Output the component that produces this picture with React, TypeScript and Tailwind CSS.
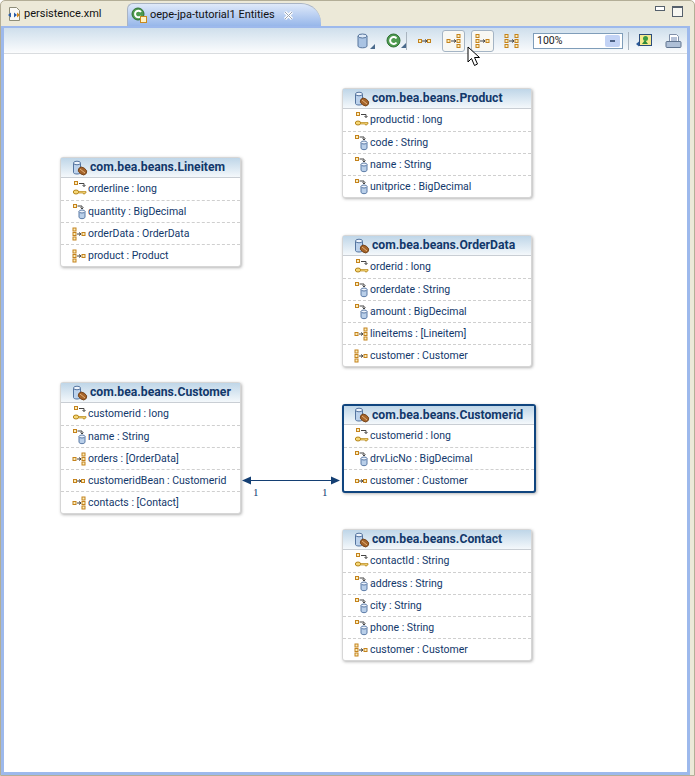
type IconKind = "key" | "col" | "o2o" | "o2m" | "m2o";

type Row = { icon: IconKind; text: string };

type Entity = {
  title: string;
  x: number;
  y: number;
  w: number;
  selected?: boolean;
  rows: Row[];
};

const entities: Entity[] = [
  {
    title: "com.bea.beans.Product",
    x: 342,
    y: 88,
    w: 190,
    rows: [
      { icon: "key", text: "productid : long" },
      { icon: "col", text: "code : String" },
      { icon: "col", text: "name : String" },
      { icon: "col", text: "unitprice : BigDecimal" },
    ],
  },
  {
    title: "com.bea.beans.Lineitem",
    x: 60,
    y: 157,
    w: 181,
    rows: [
      { icon: "key", text: "orderline : long" },
      { icon: "col", text: "quantity : BigDecimal" },
      { icon: "m2o", text: "orderData : OrderData" },
      { icon: "m2o", text: "product : Product" },
    ],
  },
  {
    title: "com.bea.beans.OrderData",
    x: 342,
    y: 235,
    w: 190,
    rows: [
      { icon: "key", text: "orderid : long" },
      { icon: "col", text: "orderdate : String" },
      { icon: "col", text: "amount : BigDecimal" },
      { icon: "o2m", text: "lineitems : [Lineitem]" },
      { icon: "m2o", text: "customer : Customer" },
    ],
  },
  {
    title: "com.bea.beans.Customer",
    x: 60,
    y: 382,
    w: 181,
    rows: [
      { icon: "key", text: "customerid : long" },
      { icon: "col", text: "name : String" },
      { icon: "o2m", text: "orders : [OrderData]" },
      { icon: "o2o", text: "customeridBean : Customerid" },
      { icon: "o2m", text: "contacts : [Contact]" },
    ],
  },
  {
    title: "com.bea.beans.Customerid",
    x: 342,
    y: 404,
    w: 194,
    selected: true,
    rows: [
      { icon: "key", text: "customerid : long" },
      { icon: "col", text: "drvLicNo : BigDecimal" },
      { icon: "o2o", text: "customer : Customer" },
    ],
  },
  {
    title: "com.bea.beans.Contact",
    x: 342,
    y: 529,
    w: 190,
    rows: [
      { icon: "key", text: "contactId : String" },
      { icon: "col", text: "address : String" },
      { icon: "col", text: "city : String" },
      { icon: "col", text: "phone : String" },
      { icon: "m2o", text: "customer : Customer" },
    ],
  },
];

// little orange table cell used by all the mapping icons
const Cell = ({ x, y }: { x: number; y: number }) => (
  <rect x={x} y={y} width="3" height="3" fill="#fbeebc" stroke="#c4821c" strokeWidth="1" />
);

const Arrow = ({ x, y, w }: { x: number; y: number; w: number }) => (
  <path d={`M${x} ${y}h${w}m-2 -1.5l2 1.5l-2 1.5`} fill="none" stroke="#444" strokeWidth="1" />
);

const KeyIcon = () => (
  <svg width="16" height="16" viewBox="0 0 16 16" className="shrink-0">
    <Cell x={2.5} y={0.5} />
    <path d="M7 2.500h5v3m-1.500-1.500l1.500 1.500l1.500-1.500" fill="none" stroke="#444" strokeWidth="1" />
    <ellipse cx="4" cy="11" rx="2.700" ry="2" fill="#f5d677" stroke="#b58518" strokeWidth="1" />
    <path d="M6.500 10.500h7.500v1.500h-1.200v1h-1.500v-1H6.500z" fill="#f5d677" stroke="#b58518" strokeWidth="0.7" />
  </svg>
);

const ColumnIcon = () => (
  <svg width="16" height="16" viewBox="0 0 16 16" className="shrink-0">
    <Cell x={1.500} y={0.500} />
    <path d="M5.500 2h4.500v3m-1.500-1.500l1.500 1.500l1.500-1.500" fill="none" stroke="#444" strokeWidth="1" />
    <path d="M7 7.500v5.500c0 2.200 6 2.200 6 0V7.500" fill="#b9cfe9" stroke="#5a7aa6" strokeWidth="1" />
    <ellipse cx="10" cy="7.500" rx="3" ry="1.500" fill="#eef4fc" stroke="#5a7aa6" strokeWidth="1" />
  </svg>
);

const AttrIcon = ({ kind }: { kind: IconKind }) => {
  if (kind === "key") return <KeyIcon />;
  if (kind === "col") return <ColumnIcon />;
  return (
    <svg width="16" height="16" viewBox="0 0 16 16" className="shrink-0">
      {kind === "o2o" && (
        <>
          <Cell x={1.500} y={6.500} />
          <Arrow x={5} y={8} w={4} />
          <Cell x={9.500} y={6.500} />
        </>
      )}
      {kind === "o2m" && (
        <>
          <Cell x={1} y={6.500} />
          <Arrow x={5} y={8} w={4} />
          <Cell x={10} y={2} />
          <Cell x={10} y={6.500} />
          <Cell x={10} y={11} />
        </>
      )}
      {kind === "m2o" && (
        <>
          <Cell x={1} y={2} />
          <Cell x={1} y={6.500} />
          <Cell x={1} y={11} />
          <Arrow x={5} y={8} w={4} />
          <Cell x={10} y={6.500} />
        </>
      )}
    </svg>
  );
};

const EntityIcon = () => (
  <svg width="16" height="16" viewBox="0 0 16 16" className="shrink-0">
    <path d="M1.500 3v9.500c0 2 7 2 7 0V3" fill="#bcd2ec" stroke="#54749f" strokeWidth="1" />
    <ellipse cx="5" cy="3" rx="3.500" ry="1.800" fill="#eef4fc" stroke="#54749f" strokeWidth="1" />
    <ellipse cx="10.500" cy="11" rx="4.500" ry="3.400" fill="#a5642a" stroke="#6d3d14" strokeWidth="0.8" transform="rotate(35 10.500 11)" />
    <path d="M8 9l5 4" stroke="#e2b27c" strokeWidth="1" />
  </svg>
);

const EntityCard = ({ entity }: { entity: Entity }) => (
  <div
    style={{ left: entity.x, top: entity.y, width: entity.w }}
    className={`absolute flex flex-col rounded-[3px] bg-white shadow-[1px_1px_3px_rgba(90,90,90,0.45)] ${
      entity.selected ? "border-2 border-[#10457f]" : "border border-[#d6d6d6]"
    }`}
  >
    <div
      className={`flex items-center gap-[2px] border-b border-[#c9ced4] bg-gradient-to-b from-[#bfd6e8] to-[#f4f8fb] ${
        entity.selected ? "h-[19px] pl-[10px]" : "h-[20px] pl-[11px]"
      }`}
    >
      <EntityIcon />
      <span className="whitespace-nowrap text-[12.200px] font-bold text-[#12386b]">{entity.title}</span>
    </div>
    {entity.rows.map((row, i) => (
      <div
        key={row.text}
        className={`flex h-[22px] items-center ${entity.selected ? "pl-[10px]" : "pl-[11px]"} ${
          i > 0 ? "border-t border-dashed border-[#cfcfcf]" : ""
        }`}
      >
        <AttrIcon kind={row.icon} />
        <span className="whitespace-nowrap text-[10.500px] text-[#12386b]">{row.text}</span>
      </div>
    ))}
  </div>
);

const Connection = () => (
  <svg width="100" height="24" viewBox="0 0 100 24" className="absolute left-[241px] top-[473px]">
    <path d="M2 7.500H98" stroke="#143f73" strokeWidth="1" />
    <path d="M1 7.500l9-4v8z" fill="#143f73" />
    <path d="M99 7.500l-9-4v8z" fill="#143f73" />
  </svg>
);

const ToolDivider = () => <div className="h-[18px] w-px bg-[#a9b4bf]" />;

const ToolButton = ({ children, active }: { children: React.ReactNode; active?: boolean }) => (
  <div
    className={`flex h-[22px] w-[23px] items-center justify-center rounded-[3px] ${
      active ? "border border-[#a4b4c4] bg-[#f8f8f4]" : ""
    }`}
  >
    {children}
  </div>
);

const LayoutIcon = ({ kind }: { kind: "o2o" | "o2m" | "m2o" | "m2m" }) => (
  <svg width="16" height="16" viewBox="0 0 16 16">
    {kind === "o2o" && (
      <>
        <Cell x={1.500} y={6.500} />
        <Arrow x={5} y={8} w={5} />
        <Cell x={10.500} y={6.500} />
      </>
    )}
    {kind === "o2m" && (
      <>
        <Cell x={1} y={6.500} />
        <Arrow x={5} y={8} w={5} />
        <Cell x={11} y={1.500} />
        <Cell x={11} y={6.500} />
        <Cell x={11} y={11.500} />
      </>
    )}
    {kind === "m2o" && (
      <>
        <Cell x={1} y={1.500} />
        <Cell x={1} y={6.500} />
        <Cell x={1} y={11.500} />
        <Arrow x={5} y={8} w={5} />
        <Cell x={11} y={6.500} />
      </>
    )}
    {kind === "m2m" && (
      <>
        <Cell x={1} y={1.500} />
        <Cell x={1} y={6.500} />
        <Cell x={1} y={11.500} />
        <Arrow x={5} y={8} w={5} />
        <Cell x={11} y={1.500} />
        <Cell x={11} y={6.500} />
        <Cell x={11} y={11.500} />
      </>
    )}
  </svg>
);

const DropCorner = () => (
  <svg width="5" height="5" viewBox="0 0 5 5" className="self-end">
    <path d="M5 0v5H0z" fill="#4a6a8c" />
  </svg>
);

const Toolbar = () => (
  <div className="flex h-[26px] items-center justify-end border-b border-[#d9dcdf] bg-gradient-to-b from-[#cfdfec] to-[#fbfcfd] pr-[5px]">
    <div className="flex w-[23px] items-center">
      <svg width="14" height="16" viewBox="0 0 14 16">
        <path d="M2 3v10c0 2.400 9 2.400 9 0V3" fill="#a9c3e3" stroke="#56749c" strokeWidth="1" />
        <ellipse cx="6.500" cy="3" rx="4.500" ry="2" fill="#dde9f7" stroke="#56749c" strokeWidth="1" />
      </svg>
      <DropCorner />
    </div>
    <div className="ml-[7px] flex w-[20px] items-center">
      <svg width="15" height="15" viewBox="0 0 15 15">
        <circle cx="7.500" cy="7.500" r="6.500" fill="#4d9a4f" stroke="#2f7034" />
        <path d="M10.500 5.500a3.500 3.500 0 1 0 0 4" fill="none" stroke="#fff" strokeWidth="2" />
      </svg>
      <DropCorner />
    </div>
    <div className="mr-[6px]">
      <ToolDivider />
    </div>
    <ToolButton>
      <LayoutIcon kind="o2o" />
    </ToolButton>
    <div className="w-[6px]" />
    <ToolButton active>
      <LayoutIcon kind="o2m" />
    </ToolButton>
    <div className="w-[6px]" />
    <ToolButton active>
      <LayoutIcon kind="m2o" />
    </ToolButton>
    <div className="w-[6px]" />
    <ToolButton>
      <LayoutIcon kind="m2m" />
    </ToolButton>
    <div className="ml-[10px] flex h-[16px] w-[90px] items-center justify-between border border-[#7f9db9] bg-white pl-[3px] pr-[2px] text-[10.500px] text-[#222]">
      <span>100%</span>
      <div className="flex h-[12px] w-[15px] items-center justify-center rounded-[2px] bg-[#c3d3f5]">
        <div className="h-[2px] w-[5px] bg-[#4d6185]" />
      </div>
    </div>
    <div className="ml-[5px] mr-[7px]">
      <ToolDivider />
    </div>
    <svg width="17" height="16" viewBox="0 0 17 16">
      <rect x="3.500" y="1.500" width="12" height="11" fill="#f7e98e" stroke="#2c4c7c" />
      <path d="M6 11l3-4 3 4z" fill="#2f8a3a" />
      <circle cx="9.500" cy="5.500" r="2.500" fill="#3a9a45" />
      <path d="M0 11l3-2.500v5z" fill="#2c5c9c" />
    </svg>
    <div className="w-[12px]" />
    <svg width="17" height="16" viewBox="0 0 17 16">
      <path d="M4.500 1.500h7l2 2v6h-9z" fill="#fff" stroke="#7f8fa8" />
      <path d="M6 5h6M6 7h6" stroke="#6d84b0" />
      <rect x="1" y="8.500" width="15" height="6" rx="1" fill="#aebfd6" stroke="#60748f" />
    </svg>
  </div>
);

const XmlIcon = () => (
  <svg width="15" height="16" viewBox="0 0 15 16" className="shrink-0">
    <path d="M2.500 1.500h7l3 3v10h-10z" fill="#fbfbf6" stroke="#8d8d78" />
    <path d="M1 9l3-2.500v5zM7 6.500v5l3-2.500z" fill="#2a5ea8" />
    <path d="M13 9l-3-2.500v5z" fill="#d98a1c" />
  </svg>
);

const TabBar = () => (
  <div className="relative flex h-[25px] items-end">
    <div className="ml-[4px] flex h-[24px] w-[122px] items-center gap-[2px] pl-[2px] text-[11px] text-[#111]">
      <XmlIcon />
      <span className="whitespace-nowrap">persistence.xml</span>
    </div>
    <div className="flex h-[23px] w-[194px] items-center rounded-tl-[6px] rounded-tr-[20px] border-l border-t border-[#a9b4c4] bg-gradient-to-b from-[#dfe9f9] to-[#97b7ea] pl-[3px] text-[11px] text-[#111]">
      <svg width="17" height="17" viewBox="0 0 17 17" className="shrink-0">
        <circle cx="7" cy="7" r="6" fill="#4d9a4f" stroke="#2f7034" />
        <path d="M10 5a3.300 3.300 0 1 0 0 4" fill="none" stroke="#fff" strokeWidth="2" />
        <rect x="9.500" y="9.500" width="6" height="6" fill="#fff2c4" stroke="#c98a1e" />
      </svg>
      <span className="ml-[2px] whitespace-nowrap">oepe-jpa-tutorial1 Entities</span>
      <svg width="11" height="11" viewBox="0 0 11 11" className="ml-[8px]">
        <path d="M2 2l7 7M9 2l-7 7" stroke="#fff" strokeWidth="3" />
        <path d="M2 2l7 7M9 2l-7 7" stroke="#9aa4b4" strokeWidth="1" />
      </svg>
    </div>
    <div className="ml-auto flex items-start gap-[7px] self-start pr-[7px] pt-[5px]">
      <div className="h-[5px] w-[10px] border border-[#55606c] bg-white" />
      <div className="h-[11px] w-[11px] border border-[#55606c] border-t-2 bg-[#f7f7f2]" />
    </div>
  </div>
);

const Cursor = () => (
  <svg width="16" height="22" viewBox="0 0 16 22" className="absolute left-[467px] top-[46px]">
    <path d="M1 1v15l3.500-3.500 3 7 3-1.500-3-6.500h5z" fill="#fff" stroke="#000" strokeWidth="1" />
  </svg>
);

export default function App() {
  return (
    <div className="relative flex h-[776px] w-[695px] flex-col overflow-hidden rounded-t-[5px] border border-[#b3ae97] bg-[#ece9d8] pr-[4px] font-['Roboto',sans-serif]">
      <TabBar />
      <div className="flex min-h-0 flex-1 flex-col border-[3px] border-t-2 border-[#9db9ec] bg-white">
        <Toolbar />
        <div className="flex-1 bg-white" />
      </div>
      <div className="absolute -left-px -top-px">
        {entities.map((entity) => (
          <EntityCard key={entity.title} entity={entity} />
        ))}
        <Connection />
        <span className="absolute left-[253px] top-[484px] font-['Liberation_Serif',serif] text-[11px] text-[#143f73]">1</span>
        <span className="absolute left-[322px] top-[484px] font-['Liberation_Serif',serif] text-[11px] text-[#143f73]">1</span>
        <Cursor />
      </div>
    </div>
  );
}
